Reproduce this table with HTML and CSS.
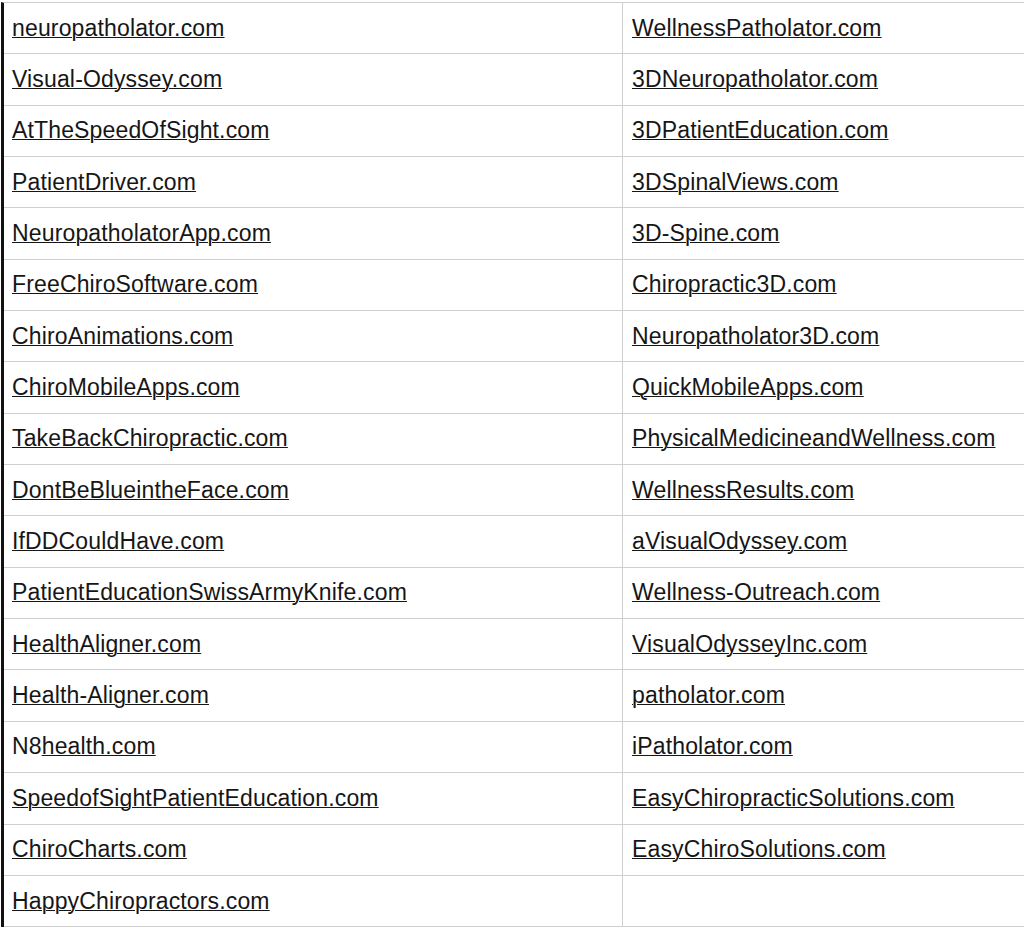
FILE: index.html
```html
<!DOCTYPE html>
<html>
<head>
<meta charset="utf-8">
<link rel="stylesheet" href="styles.css">
</head>
<body>
<div class="sites">
  <div class="cell"><a class="link" href="#">neuropatholator.com</a></div>
  <div class="cell right"><a class="link" href="#">WellnessPatholator.com</a></div>
  <div class="cell"><a class="link" href="#">Visual-Odyssey.com</a></div>
  <div class="cell right"><a class="link" href="#">3DNeuropatholator.com</a></div>
  <div class="cell"><a class="link" href="#">AtTheSpeedOfSight.com</a></div>
  <div class="cell right"><a class="link" href="#">3DPatientEducation.com</a></div>
  <div class="cell"><a class="link" href="#">PatientDriver.com</a></div>
  <div class="cell right"><a class="link" href="#">3DSpinalViews.com</a></div>
  <div class="cell"><a class="link" href="#">NeuropatholatorApp.com</a></div>
  <div class="cell right"><a class="link" href="#">3D-Spine.com</a></div>
  <div class="cell"><a class="link" href="#">FreeChiroSoftware.com</a></div>
  <div class="cell right"><a class="link" href="#">Chiropractic3D.com</a></div>
  <div class="cell"><a class="link" href="#">ChiroAnimations.com</a></div>
  <div class="cell right"><a class="link" href="#">Neuropatholator3D.com</a></div>
  <div class="cell"><a class="link" href="#">ChiroMobileApps.com</a></div>
  <div class="cell right"><a class="link" href="#">QuickMobileApps.com</a></div>
  <div class="cell"><a class="link" href="#">TakeBackChiropractic.com</a></div>
  <div class="cell right"><a class="link" href="#">PhysicalMedicineandWellness.com</a></div>
  <div class="cell"><a class="link" href="#">DontBeBlueintheFace.com</a></div>
  <div class="cell right"><a class="link" href="#">WellnessResults.com</a></div>
  <div class="cell"><a class="link" href="#">IfDDCouldHave.com</a></div>
  <div class="cell right"><a class="link" href="#">aVisualOdyssey.com</a></div>
  <div class="cell"><a class="link" href="#">PatientEducationSwissArmyKnife.com</a></div>
  <div class="cell right"><a class="link" href="#">Wellness-Outreach.com</a></div>
  <div class="cell"><a class="link" href="#">HealthAligner.com</a></div>
  <div class="cell right"><a class="link" href="#">VisualOdysseyInc.com</a></div>
  <div class="cell"><a class="link" href="#">Health-Aligner.com</a></div>
  <div class="cell right"><a class="link" href="#">patholator.com</a></div>
  <div class="cell"><span class="plain">N8<a class="link" href="#">health.com</a></span></div>
  <div class="cell right"><a class="link" href="#">iPatholator.com</a></div>
  <div class="cell"><a class="link" href="#">SpeedofSightPatientEducation.com</a></div>
  <div class="cell right"><a class="link" href="#">EasyChiropracticSolutions.com</a></div>
  <div class="cell"><a class="link" href="#">ChiroCharts.com</a></div>
  <div class="cell right"><a class="link" href="#">EasyChiroSolutions.com</a></div>
  <div class="cell"><a class="link" href="#">HappyChiropractors.com</a></div>
  <div class="cell right"></div>
</div>
</body>
</html>
```
FILE: styles.css
```css
html, body {
  margin: 0;
  padding: 0;
  background: #fff;
  overflow: hidden;
}
.sites {
  display: grid;
  grid-template-columns: 618px 420px;
  margin: 2px 0 0 1px;
  border-left: 3px solid #111;
  border-top: 1px solid #cfcfcf;
  font-family: "Liberation Sans", Arial, sans-serif;
  font-size: 23px;
  letter-spacing: 0.15px;
}
.cell {
  height: 50.35px;
  border-bottom: 1px solid #cfcfcf;
  display: flex;
  align-items: center;
  padding-left: 8px;
  box-sizing: content-box;
}
.right {
  border-left: 1px solid #cfcfcf;
  padding-left: 9px;
}
.link {
  color: #161616;
  text-decoration: underline;
  text-decoration-thickness: 1px;
}
.plain {
  color: #161616;
}
```
